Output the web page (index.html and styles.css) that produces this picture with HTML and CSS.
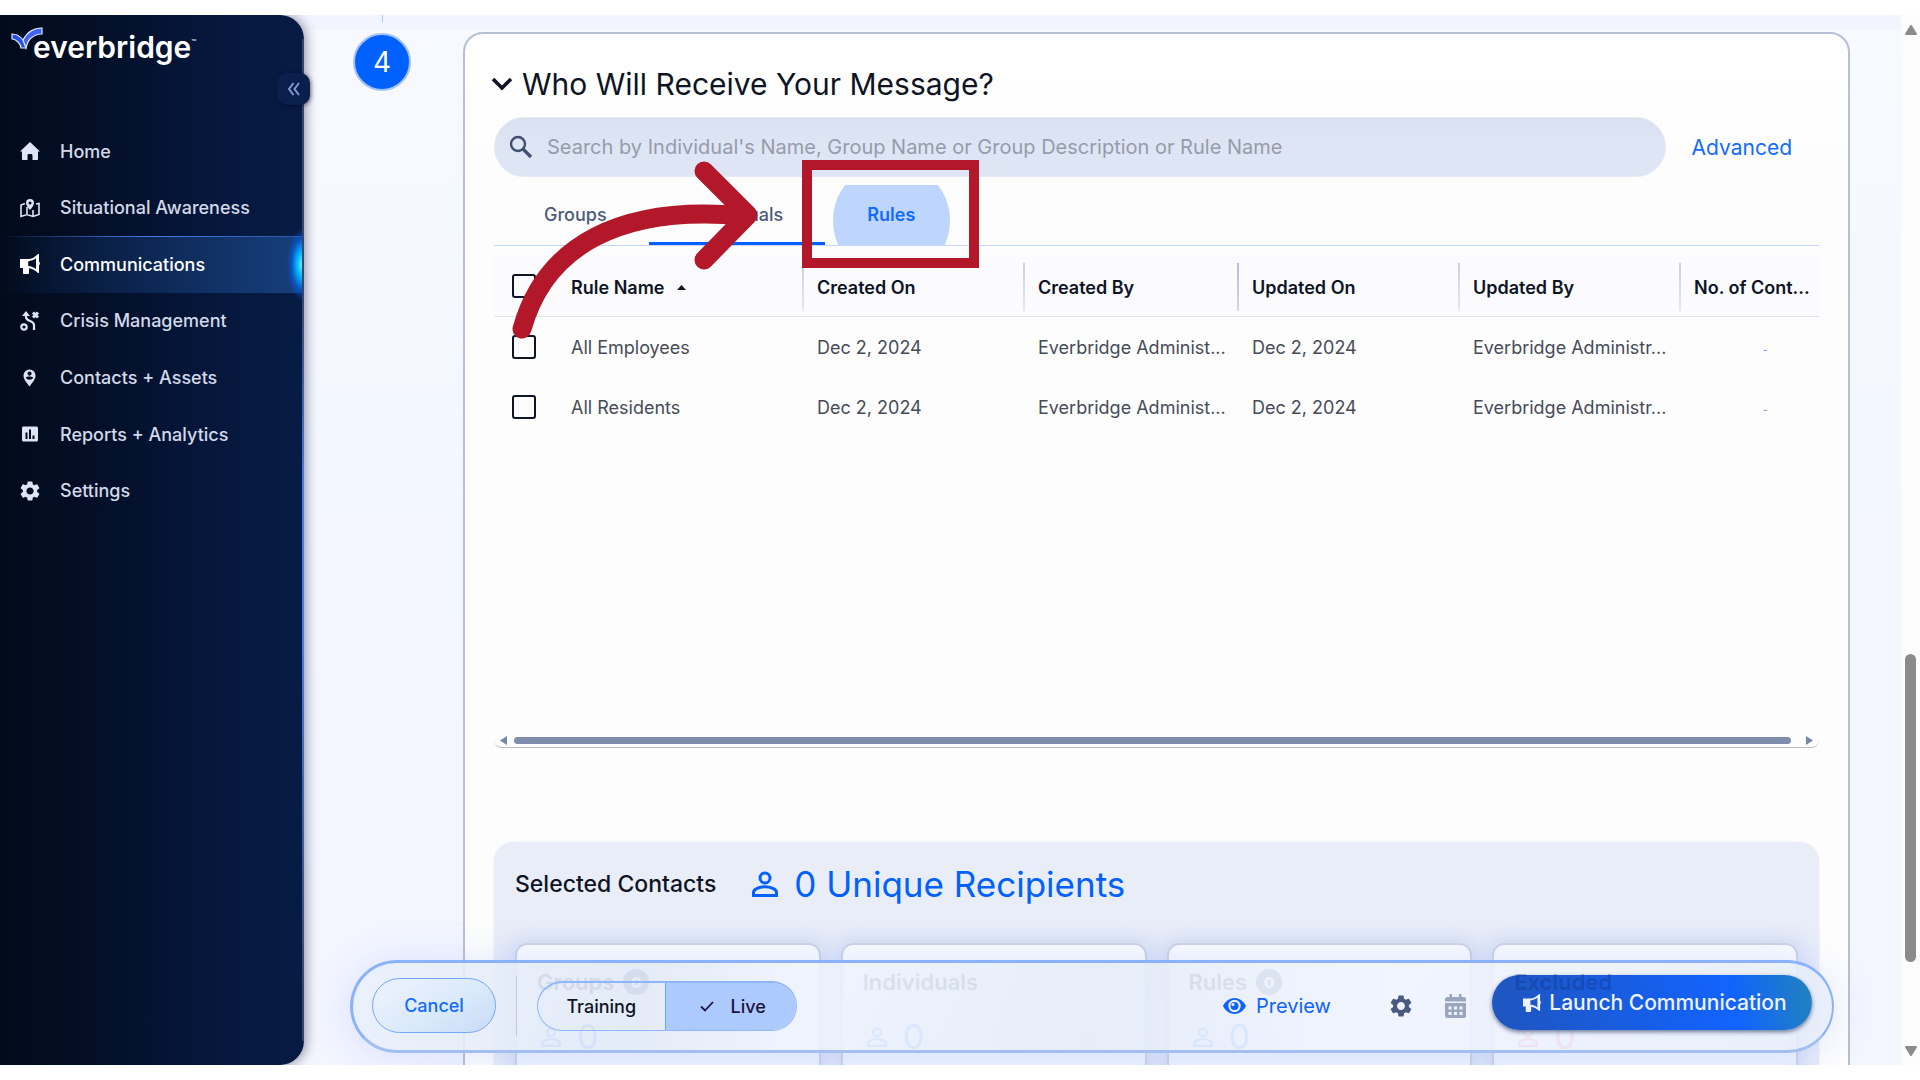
FILE: index.html
```html
<!DOCTYPE html>
<html lang="en">
<head>
<meta charset="utf-8">
<title>Everbridge - New Communication</title>
<link rel="stylesheet" href="styles.css">
</head>
<body>
<svg class="defs" width="0" height="0" aria-hidden="true">
  <symbol id="person" viewBox="0 0 26 26"><circle cx="13" cy="7" r="5" fill="none" stroke="currentColor" stroke-width="3"/><path d="M1.500 24.500v-3.200c0-3.400 6-5.500 11.500-5.500s11.500 2.100 11.500 5.500v3.200z" fill="none" stroke="currentColor" stroke-width="3"/></symbol>
  <symbol id="horn" viewBox="0 0 20 20"><path fill="currentColor" fill-rule="evenodd" d="M0 5h8c4 0 7-2 10-5h1v7.500c1 .4 1.300 3.100 0 3.900V19h-1c-3-3-6-4.500-9-4.800V19c0 .6-.4 1-1 1H4c-.6 0-1-.4-1-1v-5H0zM16 4.300c-2.400 1.700-5 2.700-7.800 2.900v4.800c2.800.3 5.400 1.200 7.800 2.900z"/></symbol>
  <symbol id="gear" viewBox="2 2 20 20"><path fill="currentColor" d="M19.140 12.940c.04-.3.060-.61.060-.94s-.02-.64-.07-.94l2.030-1.580a.49.49 0 0 0 .12-.61l-1.920-3.320a.488.488 0 0 0-.59-.22l-2.390.96c-.5-.38-1.030-.7-1.620-.94l-.36-2.540a.484.484 0 0 0-.48-.41h-3.840c-.24 0-.43.17-.47.41l-.36 2.540c-.59.24-1.130.57-1.620.94l-2.390-.96c-.22-.08-.47 0-.59.22L2.740 8.870c-.12.21-.08.47.12.61l2.030 1.580c-.05.3-.09.63-.09.94s.02.64.07.94l-2.030 1.580a.49.49 0 0 0-.12.61l1.920 3.320c.12.22.37.29.59.22l2.390-.96c.5.38 1.030.7 1.620.94l.36 2.540c.05.24.24.41.48.41h3.840c.24 0 .44-.17.47-.41l.36-2.540c.59-.24 1.130-.56 1.620-.94l2.390.96c.22.08.47 0 .59-.22l1.920-3.320c.12-.22.07-.47-.12-.61zM12 15.600c-1.980 0-3.600-1.620-3.600-3.600s1.620-3.600 3.600-3.600 3.600 1.620 3.600 3.600-1.620 3.600-3.600 3.600z"/></symbol>
</svg>

<div class="app">
  <aside class="sidebar">
    <a class="logo" href="#">
      <svg width="32" height="24" viewBox="0 0 32 24"><g fill="#2450e8" stroke="#dfe5ff" stroke-width="1.200"><path d="M1 7c5 0 8 2 11 6 2 3 3 5 3 8h-5c0-3-1-4-3-6-2-2-3-3-6-3z"/><path fill="#3f63f5" d="M31 1v6c-6 0-9 2-12 5-2 2-3 5-4 9-1-3-2-5-3-8 4-8 10-12 19-12z"/></g></svg>
      <span class="wordmark">everbridge</span><span class="tm">™</span>
    </a>
    <button class="collapse" type="button" aria-label="Collapse menu"><svg width="14" height="14" viewBox="0 0 14 14"><path d="M6.500 1L2 7l4.500 6M12 1L7.500 7l4.500 6" fill="none" stroke="currentColor" stroke-width="2"/></svg></button>
    <nav class="nav">
      <a href="#"><svg viewBox="0 0 20 20"><path fill="currentColor" d="M10 1l10 9.500h-2V18c0 .6-.4 1-1 1h-4.500v-4.500c0-1-.7-1.500-1.300-1.500H8.800c-.7 0-1.300.5-1.300 1.500V19H3c-.6 0-1-.4-1-1v-7.500H0z"/></svg>Home</a>
      <a href="#"><svg viewBox="0 0 20 20"><path d="M5 5.500L1 7v11.500l6-2 6 2 6-2V5.500l-3 .5M7 9v7.500M13 12v6.500" fill="none" stroke="currentColor" stroke-width="1.600"/><path fill="currentColor" fill-rule="evenodd" d="M10 1a4 4 0 0 1 4 4c0 2.500-2.500 5-4 7-1.500-2-4-4.500-4-7a4 4 0 0 1 4-4zm0 2.600a1.500 1.500 0 1 0 0 3 1.500 1.500 0 0 0 0-3z"/></svg>Situational Awareness</a>
      <a href="#" class="active"><svg viewBox="0 0 20 20"><use href="#horn"/></svg>Communications</a>
      <a href="#"><svg viewBox="0 0 20 20"><g fill="none" stroke="currentColor" stroke-width="2.200"><circle cx="4" cy="16" r="2.700"/><path d="M6 3v3c0 5 8 3 8 8v5"/><path d="M13 1.500l5 5M18 1.500l-5 5" stroke-width="3"/></g><path fill="currentColor" d="M6 0l4 5H2z"/></svg>Crisis Management</a>
      <a href="#"><svg viewBox="0 0 20 20"><path fill="currentColor" fill-rule="evenodd" d="M9.500 1.500a6 6 0 0 1 6 6c0 4-3.500 7.500-6 11-2.500-3.500-6-7-6-11a6 6 0 0 1 6-6zm0 2a2 2 0 1 0 0 4.200 2 2 0 0 0 0-4.200zM5.800 9.500c.8 3 6.600 3 7.400 0-1.800-1.400-5.600-1.400-7.400 0z"/></svg>Contacts + Assets</a>
      <a href="#"><svg viewBox="0 0 20 20"><path fill="currentColor" fill-rule="evenodd" d="M3.500 2.500h13c.8 0 1.500.7 1.500 1.500v12c0 .8-.7 1.500-1.500 1.500h-13c-.8 0-1.500-.7-1.500-1.500V4c0-.8.7-1.500 1.500-1.500zM5.500 8.500v6.500h2V8.500zm3.500-3V15h2V5.500zm3.500 6V15h2v-3.500z"/></svg>Reports + Analytics</a>
      <a href="#"><svg viewBox="0 0 20 20"><use href="#gear"/></svg>Settings</a>
    </nav>
  </aside>

  <main class="main">
    <div class="timeline"><span class="line"></span><span class="step">4</span></div>
    <section class="card">
      <h2 class="title"><svg width="20" height="13" viewBox="0 0 20 13"><path d="M1 1l9 9 9-9" fill="none" stroke="currentColor" stroke-width="3.600"/></svg>Who Will Receive Your Message?</h2>
      <div class="search-row">
        <label class="search">
          <svg width="24" height="24" viewBox="0 0 24 24"><circle cx="9" cy="9" r="7" fill="none" stroke="currentColor" stroke-width="2.400"/><path d="M14 14l8 8" stroke="currentColor" stroke-width="3.200"/></svg>
          <input type="search" aria-label="Search" placeholder="Search by Individual's Name, Group Name or Group Description or Rule Name">
        </label>
        <a class="advanced" href="#">Advanced</a>
      </div>
      <div class="tabs">
        <button type="button">Groups</button>
        <button type="button" class="underlined">Individuals</button>
        <button type="button" class="pressed"><span>Rules</span></button>
      </div>
      <div class="table-box">
        <table>
          <colgroup><col class="c-check"><col><col class="c-a"><col class="c-b"><col class="c-a"><col class="c-a"><col class="c-count"></colgroup>
          <thead>
            <tr><th class="check"><input type="checkbox" aria-label="Select all"></th><th>Rule Name <svg class="sort" width="9" height="5" viewBox="0 0 9 5"><path d="M0 5L4.500 0 9 5z" fill="currentColor"/></svg></th><th>Created On</th><th>Created By</th><th class="strong-sep">Updated On</th><th>Updated By</th><th>No. of Cont...</th></tr>
          </thead>
          <tbody>
            <tr><td class="check"><input type="checkbox" aria-label="Select All Employees"></td><td>All Employees</td><td>Dec 2, 2024</td><td>Everbridge Administ...</td><td>Dec 2, 2024</td><td>Everbridge Administr...</td><td class="count"><a href="#">-</a></td></tr>
            <tr><td class="check"><input type="checkbox" aria-label="Select All Residents"></td><td>All Residents</td><td>Dec 2, 2024</td><td>Everbridge Administ...</td><td>Dec 2, 2024</td><td>Everbridge Administr...</td><td class="count"><a href="#">-</a></td></tr>
          </tbody>
        </table>
        <div class="hscroll"><svg width="7" height="9" viewBox="0 0 7 9"><path d="M7 0v9L0 4.500z" fill="currentColor"/></svg><span></span><svg width="7" height="9" viewBox="0 0 7 9"><path d="M0 0v9l7-4.500z" fill="currentColor"/></svg></div>
      </div>

      <section class="selected">
        <header><h3>Selected Contacts</h3><p><svg width="26" height="26"><use href="#person"/></svg>0 Unique Recipients</p></header>
        <div class="boxes">
          <div class="box"><h4>Groups <b>0</b></h4><p><svg width="20" height="20"><use href="#person"/></svg>0</p></div>
          <div class="box"><h4>Individuals</h4><p><svg width="20" height="20"><use href="#person"/></svg>0</p></div>
          <div class="box"><h4>Rules <b>0</b></h4><p><svg width="20" height="20"><use href="#person"/></svg>0</p></div>
          <div class="box excluded"><h4>Excluded</h4><p><svg width="20" height="20"><use href="#person"/></svg>0</p></div>
        </div>
      </section>
    </section>

    <footer class="actions">
      <button type="button" class="cancel">Cancel</button>
      <span class="divider"></span>
      <div class="mode">
        <button type="button">Training</button>
        <button type="button" class="on"><svg width="14" height="11" viewBox="0 0 14 11"><path d="M1 5.500L5 9.500 13 1" fill="none" stroke="currentColor" stroke-width="1.800"/></svg>Live</button>
      </div>
      <button type="button" class="preview"><svg width="23" height="16" viewBox="0 0 23 16"><path fill="currentColor" fill-rule="evenodd" d="M11.500 0C17 0 21 4 23 8c-2 4-6 8-11.500 8S2 12 0 8c2-4 6-8 11.500-8zm0 1.800a6.200 6.200 0 1 0 0 12.400 6.200 6.200 0 0 0 0-12.400z"/><circle cx="11.500" cy="8" r="4" fill="currentColor"/><circle cx="10" cy="6.500" r="1.500" fill="#e9effb"/></svg>Preview</button>
      <button type="button" class="icon-button" aria-label="Settings"><svg width="22" height="22"><use href="#gear"/></svg></button>
      <button type="button" class="icon-button muted" aria-label="Schedule"><svg width="21" height="24" viewBox="0 0 21 24"><path fill="currentColor" fill-rule="evenodd" d="M4.500 0h2.500v3h7V0h2.500v3H19c1 0 2 1 2 2v2.500H0V5c0-1 1-2 2-2h2.500zM0 9h21v13c0 1-1 2-2 2H2c-1 0-2-1-2-2zm3.500 3.500v3h3v-3zm5.500 0v3h3v-3zm5.500 0v3h3v-3zm-11 5.500v3h3v-3zm5.500 0v3h3v-3zm5.500 0v3h3v-3z"/></svg></button>
      <button type="button" class="launch"><svg width="18" height="18"><use href="#horn"/></svg>Launch Communication</button>
    </footer>

    <div class="callout"></div>
    <svg class="arrow" width="260" height="200" viewBox="0 0 260 200"><path d="M22 180C45 97 120 55 245 67M204 22l44 44-44 45" fill="none" stroke="#b21829" stroke-width="19" stroke-linecap="round" stroke-linejoin="round"/></svg>
  </main>

  <div class="vscroll"><svg width="12" height="10" viewBox="0 0 12 10"><path d="M6 1l5 8H1z" fill="#8b8b8b" stroke="#8b8b8b" stroke-width="2" stroke-linejoin="round"/></svg><span></span><svg width="12" height="10" viewBox="0 0 12 10"><path d="M6 9l5-8H1z" fill="#8b8b8b" stroke="#8b8b8b" stroke-width="2" stroke-linejoin="round"/></svg></div>
</div>
</body>
</html>
```
FILE: styles.css
```css
* { box-sizing: border-box; }
body { margin: 0; background: #fff; font-family: Inter, "Liberation Sans", sans-serif; font-size: 18px; color: #0e1424; }
button { font: inherit; border: 0; background: none; padding: 0; margin: 0; color: inherit; }
a { text-decoration: none; color: inherit; }
h2, h3, h4, p { margin: 0; font-weight: 400; }
.defs { position: absolute; }

.app { display: flex; height: 100vh; padding: 15px 0; overflow: hidden; background: linear-gradient(#fff 15px, #f2f5ff 15px, #f2f5ff 30px, #f8f9ff 30px, #f3f7ff 40%, #f3f5ff calc(100% - 15px), #fff calc(100% - 15px)); }

.sidebar { position: relative; z-index: 2; flex: none; width: 304px; border-radius: 0 24px 24px 0; background: linear-gradient(90deg, #010b1b 0%, #030e24 25%, #05163a 65%, #071c45 100%); box-shadow: 2px 0 12px rgba(20, 25, 50, .45); clip-path: inset(0 -20px 0 0); }
.sidebar::after { content: ""; position: absolute; right: 0; top: 24px; bottom: 24px; width: 2px; background: linear-gradient(#3a456a, #3a456a 25%, #4c7be8 45%, #4c7be8 60%, #3a456a 95%); }
.logo { display: flex; align-items: flex-start; padding: 12px 0 0 11px; color: #fff; height: 108px; }
.wordmark { margin-left: -10px; font-size: 30px; line-height: 40px; font-weight: 600; }
.tm { font-size: 8px; line-height: 30px; }
.collapse { position: absolute; z-index: 1; right: -6px; top: 58px; width: 33px; height: 32px; border-radius: 10px; background: #0a1f4b; color: #7f9cd0; display: grid; place-items: center; box-shadow: 1px 1px 4px rgba(0, 0, 20, .5); }
.nav { display: grid; grid-auto-rows: 1fr; height: 396px; }
.nav a { display: flex; align-items: center; gap: 20px; padding-left: 20px; font-weight: 500; color: #d3d9e9; position: relative; }
.nav svg { width: 20px; height: 20px; color: #dfe5f5; }
.nav .active { color: #fff; background: linear-gradient(90deg, transparent, #0c2550 45%, #17407e); }
.nav .active svg { color: #fff; }
.nav .active::before { content: ""; position: absolute; inset: 0 0 auto 0; height: 1px; background: linear-gradient(90deg, transparent, #4c7be8 50%, #2a55a4); }
.nav .active::after { content: ""; position: absolute; right: 2px; top: -8px; bottom: -8px; width: 15px; background: radial-gradient(15px 36px at right, #5ff2ff 0%, #00b4ff 35%, rgba(0, 100, 255, .5) 70%, transparent 100%); }

.main { position: relative; flex: 1; min-width: 0; display: flex; padding: 0 51px 0 49px; gap: 52px; overflow: hidden; }
.timeline { flex: none; width: 58px; display: flex; flex-direction: column; align-items: center; gap: 11px; }
.line { width: 1px; height: 7px; background: #a9cbf7; }
.step { width: 58px; height: 58px; border-radius: 50%; border: 2px solid #a3c4fb; background: #0061ff; color: #fff; font-size: 28px; display: grid; place-items: center; }
.card { flex: 1; min-width: 0; margin-top: 17px; height: 1200px; padding: 30px 29px; border: 2px solid #b6bfd8; border-radius: 20px; background: linear-gradient(#fff, #fdfdfd 10%); }
.title { display: flex; align-items: center; gap: 10px; margin-left: -2px; font-size: 30px; line-height: 40px; }
.search-row { display: flex; align-items: center; gap: 26px; margin-top: 13px; padding-right: 27px; }
.search { flex: 1; display: flex; align-items: center; gap: 14px; height: 60px; padding: 0 14px; border: 1px solid #e3e9f4; border-radius: 30px; background: linear-gradient(#d9e0f0, #dee5f4 50%); color: #3f4f72; }
.search input { flex: 1; min-width: 0; border: 0; background: none; outline: 0; padding: 0; font: inherit; font-size: 20px; color: #0e1424; }
.search input::placeholder { color: #959cab; opacity: 1; }
.advanced { font-size: 21px; color: #146bff; }
.tabs { display: flex; height: 61px; margin-top: 8px; padding-left: 8px; border-bottom: 1px solid #c3d7f8; color: #4d5a78; }
.tabs button { padding: 0 42px 1px; position: relative; font-weight: 500; }
.tabs .underlined { border-bottom: 3px solid #005fff; padding-top: 2px; padding-bottom: 0; }
.tabs .pressed { color: #146bff; overflow: hidden; font-weight: 600; }
.pressed::before { content: ""; position: absolute; left: 50%; top: -23px; width: 117px; height: 117px; margin-left: -58px; border-radius: 50%; background: #bed6fd; }
.pressed span { position: relative; }

.table-box { display: flex; flex-direction: column; height: 493px; margin-top: 9px; border-radius: 8px; border-bottom: 1px solid #b9bcc4; }
table { width: 100%; table-layout: fixed; border-collapse: separate; border-spacing: 0; }
.c-check { width: 62px; } .c-a { width: 221px; } .c-b { width: 214px; } .c-count { width: 140px; }
th, td { height: 60px; padding: 0 0 0 15px; text-align: left; white-space: nowrap; }
th { height: 62px; padding-top: 4px; font-weight: 600; background: linear-gradient(#c9d0e1, #e6e9f1) 0 8px / 2px 48px no-repeat #fbfbfe; border-bottom: 1px solid #dde4f0; }
th:nth-child(-n+2) { background-image: none; }
.strong-sep { background-image: linear-gradient(#b3bcd5, #d3d8e6); }
td { color: #474b57; }
.check { padding-left: 18px; }
.check input { appearance: none; display: block; width: 24px; height: 24px; margin: 0; border: 2px solid #0e1424; border-radius: 3px; }
th.check { padding-top: 0; }
.sort { margin: 0 0 4px 8px; }
.count { padding-left: 84px; }
.count a { color: #4d8dff; font-size: 10px; }
.hscroll { display: flex; align-items: center; gap: 7px; margin-top: auto; padding: 2px 6px; color: #7787a8; }
.hscroll span { flex: 1; height: 7px; margin-right: 8px; border-radius: 4px; background: #7e8dad; }

.selected { margin-top: 94px; padding: 20px 21px; height: 400px; border-radius: 20px; background: #e9edf8; box-shadow: 0 0 2px #dfe4f0; }
.selected header { display: flex; align-items: center; gap: 36px; height: 44px; }
h3 { font-size: 23px; font-weight: 500; }
.selected header p { display: flex; align-items: center; gap: 16px; font-size: 35px; color: #0061ff; }
.boxes { display: grid; grid-template-columns: repeat(4, 1fr); gap: 20px; margin-top: 37px; }
.box { height: 200px; padding: 20px; border: 2px solid #ccd3e4; border-radius: 12px; background: linear-gradient(#fafbfe, #eef3ff 60%); box-shadow: 0 0 18px 4px rgba(160, 185, 240, .35); }
h4 { display: flex; align-items: center; gap: 9px; height: 34px; font-size: 22px; font-weight: 600; color: #5a6272; }
h4 b { display: grid; place-items: center; width: 26px; height: 26px; border-radius: 50%; background: #6c7ba0; color: #fff; font-size: 15px; }
.box p { display: flex; align-items: center; gap: 16px; margin-top: 18px; padding-left: 4px; font-size: 34px; line-height: 40px; color: #64a4ff; }
.excluded h4 { position: relative; z-index: 1; color: rgba(14, 40, 110, .3); }
.excluded p { color: #ff7a9a; }

.actions { position: absolute; left: 46px; right: 67px; bottom: 12px; display: flex; align-items: center; height: 93px; padding: 0 20px 2px 19px; border: 3px solid #8ab1fb; border-right-width: 2px; border-bottom-color: #a3bff2; border-radius: 47px; background: linear-gradient(100deg, rgba(232, 240, 252, .88), rgba(226, 234, 247, .88) 20%, rgba(238, 243, 253, .88) 30%, rgba(228, 236, 248, .88) 50%, rgba(240, 244, 254, .88) 70%, rgba(230, 237, 250, .88)); background-clip: padding-box; box-shadow: 0 3px 40px rgba(120, 150, 255, .22); }
.cancel { width: 124px; height: 55px; border: 1px solid #75a5fb; border-radius: 28px; background: linear-gradient(150deg, #e8f0fc 20%, #d8e9f9 60%, #c9dafa); color: #146bff; font-weight: 500; }
.divider { width: 1px; height: 60px; margin: 0 20px; background: #c0c9dd; }
.mode { display: flex; width: 260px; height: 50px; border: 1px solid #8fb6fb; border-top-width: 2px; border-radius: 25px; overflow: hidden; font-weight: 500; }
.mode button { flex: 1; display: flex; align-items: center; justify-content: center; gap: 17px; }
.mode .on { padding-left: 4px; background: #adcaff; border-left: 1px solid #6fa3fb; color: #1c1440; }
.preview { margin-left: auto; display: flex; align-items: center; gap: 10px; font-size: 20px; color: #0f62fe; }
.icon-button { display: grid; margin-left: 59px; color: #485a80; }
.icon-button.muted { margin-left: 33px; color: #9aa6c0; }
.launch { display: flex; align-items: center; justify-content: center; gap: 8px; width: 320px; height: 55px; margin: 0 0 6px 26px; padding-left: 6px; border-radius: 28px; background: linear-gradient(80deg, #1f55be, #1263fe 75%, #2080c0 98%); color: #edf2ff; font-size: 21px; font-weight: 500; box-shadow: 0 2px 4px rgba(20, 40, 90, .6); }

.callout { position: absolute; left: 498px; top: 145px; width: 177px; height: 108px; border: 10px solid #b21829; }
.arrow { position: absolute; left: 196px; top: 134px; }

.vscroll { flex: none; width: 19px; display: flex; flex-direction: column; align-items: center; padding: 10px 0 9px; background: #fcfcfc; }
.vscroll span { width: 11px; height: 308px; margin: auto 0 84px; border-radius: 6px; background: #8b8b8b; }
```
